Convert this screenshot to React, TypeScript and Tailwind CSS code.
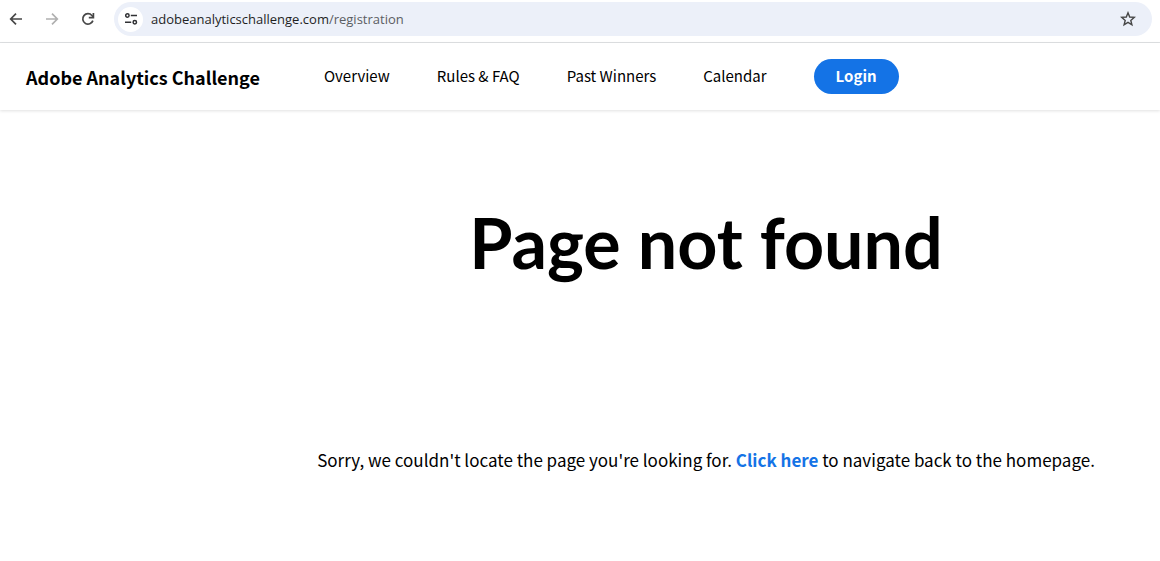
const navLinks = [
  { label: "Overview", href: "/overview" },
  { label: "Rules & FAQ", href: "/rules" },
  { label: "Past Winners", href: "/past-winners" },
  { label: "Calendar", href: "/calendar" },
];

function BrowserBar() {
  return (
    <div className="flex h-[43px] items-start border-b border-[#dfe1e3] pt-[2px] pr-2 pl-1">
      <div className="flex h-[34px] items-center gap-3 text-[#474747]">
        <button type="button" aria-label="Back" className="flex size-6 items-center justify-center">
          <svg viewBox="0 0 16 16" className="size-4" fill="none" stroke="currentColor" strokeWidth="1.7">
            <path d="M14 8H3M8 2.7 2.7 8 8 13.3" />
          </svg>
        </button>
        <button type="button" aria-label="Forward" disabled className="flex size-6 items-center justify-center text-[#b0b0b0]">
          <svg viewBox="0 0 16 16" className="size-4" fill="none" stroke="currentColor" strokeWidth="1.7">
            <path d="M2 8h11M8 2.7 13.3 8 8 13.3" />
          </svg>
        </button>
        <button type="button" aria-label="Reload" className="flex size-6 items-center justify-center">
          <svg viewBox="0 0 16 16" className="size-4" fill="none" stroke="currentColor" strokeWidth="1.7">
            <path d="M12.9 9.6A5.2 5.2 0 1 1 11.9 4.5L13 5.8" />
            <path d="M13.4 2v4.6H8.8" />
          </svg>
        </button>
      </div>
      <div className="ml-[14px] flex h-[34px] flex-1 items-center rounded-full bg-[#ecf0f9] pr-3 pl-1">
        <button type="button" aria-label="View site information" className="flex size-[25px] shrink-0 items-center justify-center rounded-full bg-white text-[#303134]">
          <svg viewBox="0 0 16 16" className="size-4" fill="none" stroke="currentColor" strokeWidth="1.5">
            <circle cx="4.4" cy="4.5" r="1.7" />
            <path d="M7.8 4.5H14M2 11.3h6.2" />
            <circle cx="11.8" cy="11.3" r="1.7" />
          </svg>
        </button>
        <p className="ml-2 flex-1 font-['Open_Sans',sans-serif] text-[13px] leading-5 text-[#5b5e63]">
          <span className="text-[#1f1f1f]">adobeanalyticschallenge.com</span>/registration
        </p>
        <button type="button" aria-label="Bookmark this page" className="flex size-6 items-center justify-center text-[#474747]">
          <svg viewBox="0 0 16 16" className="size-4" fill="none" stroke="currentColor" strokeWidth="1.4">
            <path d="m8 1.8 1.7 4.2 4.6.4-3.5 3 1.1 4.4L8 11.4l-3.9 2.4 1.1-4.4-3.5-3L6.3 6z" />
          </svg>
        </button>
      </div>
    </div>
  );
}

export default function App() {
  return (
    <div className="min-h-screen bg-white font-['Noto_Sans_CJK_SC',sans-serif] text-black">
      <BrowserBar />
      <header className="flex h-[67px] items-center pl-[26px] shadow-[0_1px_3px_rgba(0,0,0,0.12)]">
        <a href="/" className="text-lg font-bold">Adobe Analytics Challenge</a>
        <nav className="ml-16 flex items-center gap-[47px] text-[15px]">
          {navLinks.map((link) => (
            <a key={link.href} href={link.href}>{link.label}</a>
          ))}
          <button type="button" className="h-[35px] rounded-full bg-[#1473e6] px-[22px] font-bold text-white">Login</button>
        </nav>
      </header>
      <main className="pt-[87px] pl-[252px] text-center">
        <h1 className="font-[Lato,sans-serif] text-[70px] leading-[90px] font-bold">Page not found</h1>
        <p className="mt-[159px] text-[17px] leading-7">
          Sorry, we couldn't locate the page you're looking for.{" "}
          <a href="/" className="font-bold text-[#1473e6]">Click here</a> to navigate back to the homepage.
        </p>
      </main>
    </div>
  );
}
